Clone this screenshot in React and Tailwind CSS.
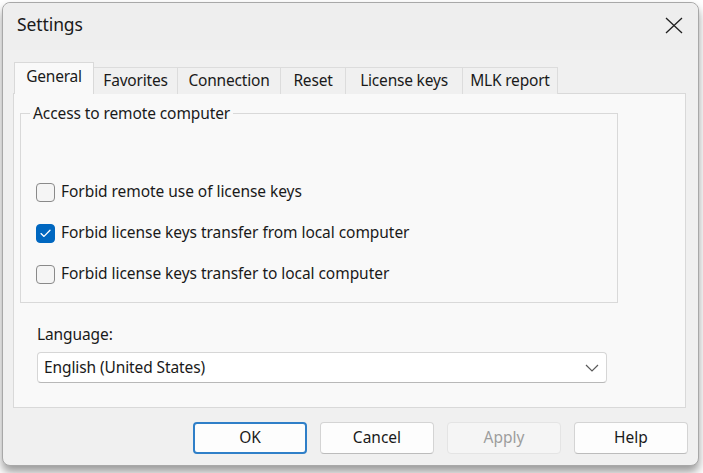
import React, { useState } from 'react';

const tabs = [
  { id: 'general', label: 'General', w: 'w-[80px]' },
  { id: 'favorites', label: 'Favorites', w: 'w-[84px]' },
  { id: 'connection', label: 'Connection', w: 'w-[103px]' },
  { id: 'reset', label: 'Reset', w: 'w-[65px]' },
  { id: 'keys', label: 'License keys', w: 'w-[117px]' },
  { id: 'mlk', label: 'MLK report', w: 'w-[95px]' },
];

function Checkbox({ checked, onChange, label }) {
  return (
    <label className="flex items-center h-[20px] cursor-default select-none">
      <span
        onClick={onChange}
        className={`w-[19px] h-[19px] rounded-[4px] flex items-center justify-center ${
          checked ? 'bg-[#0067c0] border border-[#0067c0]' : 'bg-[#f5f5f5] border border-[#8a8a8a]'
        }`}
      >
        {checked && (
          <svg width="11" height="9" viewBox="0 0 11 9" fill="none">
            <path d="M1 4.6 L4 7.4 L10 1.2" stroke="#ffffff" strokeWidth="1.3" strokeLinecap="round" strokeLinejoin="round" />
          </svg>
        )}
      </span>
      <span className="ml-[6px] text-[15.5px] text-[#1a1a1a] tracking-[-0.05px]">{label}</span>
    </label>
  );
}

function DialogButton({ children, primary, disabled }) {
  return (
    <button
      type="button"
      disabled={disabled}
      className={`w-[114px] h-[32px] rounded-[4px] text-[15.5px] ${
        primary
          ? 'bg-[#fdfdfd] border-2 border-[#2f7fc8] text-[#1a1a1a]'
          : disabled
          ? 'bg-[#f5f5f5] border border-[#e4e4e4] text-[#9d9d9d]'
          : 'bg-[#fdfdfd] border border-[#d4d4d4] border-b-[#bcbcbc] text-[#1a1a1a]'
      }`}
    >
      {children}
    </button>
  );
}

export default function App() {
  const [active, setActive] = useState('general');
  const [opts, setOpts] = useState({ remote: false, from: true, to: false });
  const toggle = (k) => setOpts((p) => ({ ...p, [k]: !p[k] }));

  return (
    <div
      className="w-[703px] h-[473px] bg-[#ffffff] pt-[2px] pl-[2px] overflow-hidden"
      style={{ fontFamily: '"Noto Sans", "Open Sans", sans-serif' }}
    >
      <div className="w-[697px] h-[464px] bg-[#f0f0f0] border border-[#a8a8a8] rounded-[8px] shadow-[0_6px_10px_rgba(0,0,0,0.4)] flex flex-col">
        {/* title bar */}
        <div className="h-[47px] flex items-center justify-between pl-[14px] pr-[15px] pb-[4px] bg-[#eeeeee] rounded-t-[8px]">
          <span className="text-[17.5px] text-[#1a1a1a] tracking-[-0.1px]">Settings</span>
          <svg width="18" height="17" viewBox="0 0 18 17" fill="none" className="mt-[1px]">
            <path d="M1 1 L17 16 M17 1 L1 16" stroke="#1f1f1f" strokeWidth="1.3" />
          </svg>
        </div>

        <div className="pl-[10px] pt-[12px]">
          {/* tabs */}
          <div className="flex items-end pl-[1px] h-[32px] relative z-10">
            {tabs.map((t) =>
              t.id === active ? (
                <button
                  key={t.id}
                  onClick={() => setActive(t.id)}
                  className={`${t.w} h-[32px] bg-[#f9f9f9] border border-[#d9d9d9] border-b-0 text-[15.5px] text-[#1a1a1a] tracking-[-0.2px] pb-[3px]`}
                >
                  {t.label}
                </button>
              ) : (
                <button
                  key={t.id}
                  onClick={() => setActive(t.id)}
                  className={`${t.w} h-[27px] bg-[#f0f0f0] border border-[#dcdcdc] border-b-0 border-l-0 text-[15.5px] text-[#1a1a1a] tracking-[-0.2px]`}
                >
                  {t.label}
                </button>
              )
            )}
          </div>

          {/* panel */}
          <div className="w-[673px] h-[315px] -mt-[1px] bg-[#f9f9f9] border border-[#d9d9d9] pl-[6px] pt-[19px]">
            <div className="relative w-[598px] h-[190px] border border-[#d9d9d9] pl-[15px] pt-[68px]">
              <span className="absolute left-[9px] -top-[12px] px-[3px] bg-[#f9f9f9] text-[15.5px] text-[#1a1a1a] tracking-[-0.1px]">
                Access to remote computer
              </span>
              <div className="flex flex-col gap-[21px]">
                <Checkbox checked={opts.remote} onChange={() => toggle('remote')} label="Forbid remote use of license keys" />
                <Checkbox checked={opts.from} onChange={() => toggle('from')} label="Forbid license keys transfer from local computer" />
                <Checkbox checked={opts.to} onChange={() => toggle('to')} label="Forbid license keys transfer to local computer" />
              </div>
            </div>

            <div className="pl-[17px] pt-[20px]">
              <div className="text-[15.5px] text-[#1a1a1a] tracking-[-0.1px] leading-[22px]">Language:</div>
              <div className="mt-[7px] w-[570px] h-[31px] bg-[#ffffff] border border-[#d6d6d6] border-b-[#b8b8b8] rounded-[4px] flex items-center justify-between pl-[6px] pr-[7px]">
                <span className="text-[15.5px] text-[#1a1a1a] tracking-[-0.1px]">English (United States)</span>
                <svg width="14" height="8" viewBox="0 0 14 8" fill="none">
                  <path d="M1 1 L7 7 L13 1" stroke="#5a5a5a" strokeWidth="1.2" />
                </svg>
              </div>
            </div>
          </div>

          {/* buttons */}
          <div className="w-[675px] flex justify-end gap-[13px] pt-[14px]">
            <DialogButton primary>OK</DialogButton>
            <DialogButton>Cancel</DialogButton>
            <DialogButton disabled>Apply</DialogButton>
            <DialogButton>Help</DialogButton>
          </div>
        </div>
      </div>
    </div>
  );
}
